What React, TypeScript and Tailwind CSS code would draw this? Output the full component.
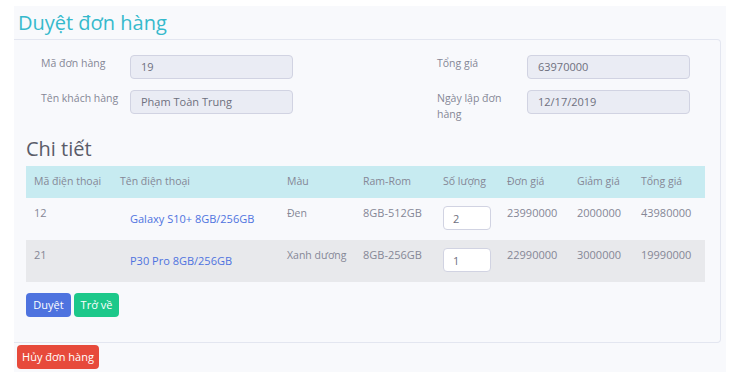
import React from 'react';

const font = { fontFamily: '"Open Sans", "Noto Sans", sans-serif' };

const rows = [
  {
    id: '12',
    name: 'Galaxy S10+ 8GB/256GB',
    color: 'Đen',
    ram: '8GB-512GB',
    qty: '2',
    price: '23990000',
    discount: '2000000',
    total: '43980000',
  },
  {
    id: '21',
    name: 'P30 Pro 8GB/256GB',
    color: 'Xanh dương',
    ram: '8GB-256GB',
    qty: '1',
    price: '22990000',
    discount: '3000000',
    total: '19990000',
  },
];

const cols = 'grid grid-cols-[86px_167px_76px_80px_64px_70px_64px_72px]';

const Field = ({ label, value, labelW }: { label: string; value: string; labelW: string }) => (
  <div className="flex items-start">
    <div className={`${labelW} text-[10.5px] leading-[16px] text-[#858796]`}>{label}</div>
    <div className="w-[163px] h-[24px] rounded-[4px] border border-[#d1d3e2] bg-[#eaecf4] pl-[10px] flex items-center text-[11px] text-[#6e707e]">
      {value}
    </div>
  </div>
);

const App = () => {
  return (
    <div className="w-[738px] h-[381px] bg-white pt-[6px] pl-[14px]" style={font}>
      <div className="w-[712px] h-[366px] bg-[#f8f9fc]">
        <h3 className="h-[33px] pl-[4px] text-[20px] leading-[33px] text-[#36b9cc]">Duyệt đơn hàng</h3>

        <div className="w-[707px] h-[304px] border-t border-r border-b border-[#e3e6f0] rounded-r-[4px] pt-[15px] pl-[12px]">
          <div className="flex">
            <div className="w-[411px] pl-[15px] flex flex-col gap-[11px]">
              <Field label="Mã đơn hàng" value="19" labelW="w-[89px]" />
              <Field label="Tên khách hàng" value="Phạm Toàn Trung" labelW="w-[89px]" />
            </div>
            <div className="flex flex-col gap-[11px]">
              <Field label="Tổng giá" value="63970000" labelW="w-[90px]" />
              <Field label="Ngày lập đơn hàng" value="12/17/2019" labelW="w-[68px] mr-[22px]" />
            </div>
          </div>

          <h4 className="mt-[12px] h-[30px] text-[20px] leading-[30px] text-[#5a5c69]">Chi tiết</h4>

          <div className="mt-[2px] w-[679px] text-[11px] text-[#858796]">
            <div className={`${cols} h-[32px] items-center bg-[#c7ebf1] text-[10.5px]`}>
              <div className="pl-[8px]">Mã điện thoại</div>
              <div className="pl-[8px]">Tên điện thoại</div>
              <div className="pl-[8px]">Màu</div>
              <div className="pl-[8px]">Ram-Rom</div>
              <div className="pl-[8px]">Số lượng</div>
              <div className="pl-[8px]">Đơn giá</div>
              <div className="pl-[8px]">Giảm giá</div>
              <div className="pl-[8px]">Tổng giá</div>
            </div>
            {rows.map((r, i) => (
              <div
                key={r.id}
                className={`${cols} h-[42px] leading-[16px] pt-[6px] ${i === 0 ? 'bg-[#f8f9fc]' : 'bg-[#e8e9ec]'}`}
              >
                <div className="pl-[8px] pt-[1px]">{r.id}</div>
                <div className="pl-[18px] pt-[7px]">
                  <a href="#" className="text-[#4e73df]">{r.name}</a>
                </div>
                <div className="pl-[8px] pt-[1px] text-[10.5px]">{r.color}</div>
                <div className="pl-[8px] pt-[1px]">{r.ram}</div>
                <div className="pl-[8px] pt-[2px]">
                  <input
                    readOnly
                    value={r.qty}
                    className="w-[48px] h-[24px] rounded-[4px] border border-[#d1d3e2] bg-white pl-[9px] text-[11px] text-[#6e707e] outline-none"
                  />
                </div>
                <div className="pl-[8px] pt-[1px]">{r.price}</div>
                <div className="pl-[8px] pt-[1px]">{r.discount}</div>
                <div className="pl-[8px] pt-[1px]">{r.total}</div>
              </div>
            ))}
          </div>

          <div className="mt-[11px] flex gap-[3px]">
            <button className="w-[45px] h-[24px] rounded-[4px] bg-[#4e73df] text-[11px] text-white">Duyệt</button>
            <button className="w-[45px] h-[24px] rounded-[4px] bg-[#1cc88a] text-[11px] text-white">Trở về</button>
          </div>
        </div>

        <button className="ml-[3px] mt-[1px] w-[82px] h-[24px] rounded-[4px] bg-[#e74a3b] text-[11px] text-white">
          Hủy đơn hàng
        </button>
      </div>
    </div>
  );
};

export default App;
